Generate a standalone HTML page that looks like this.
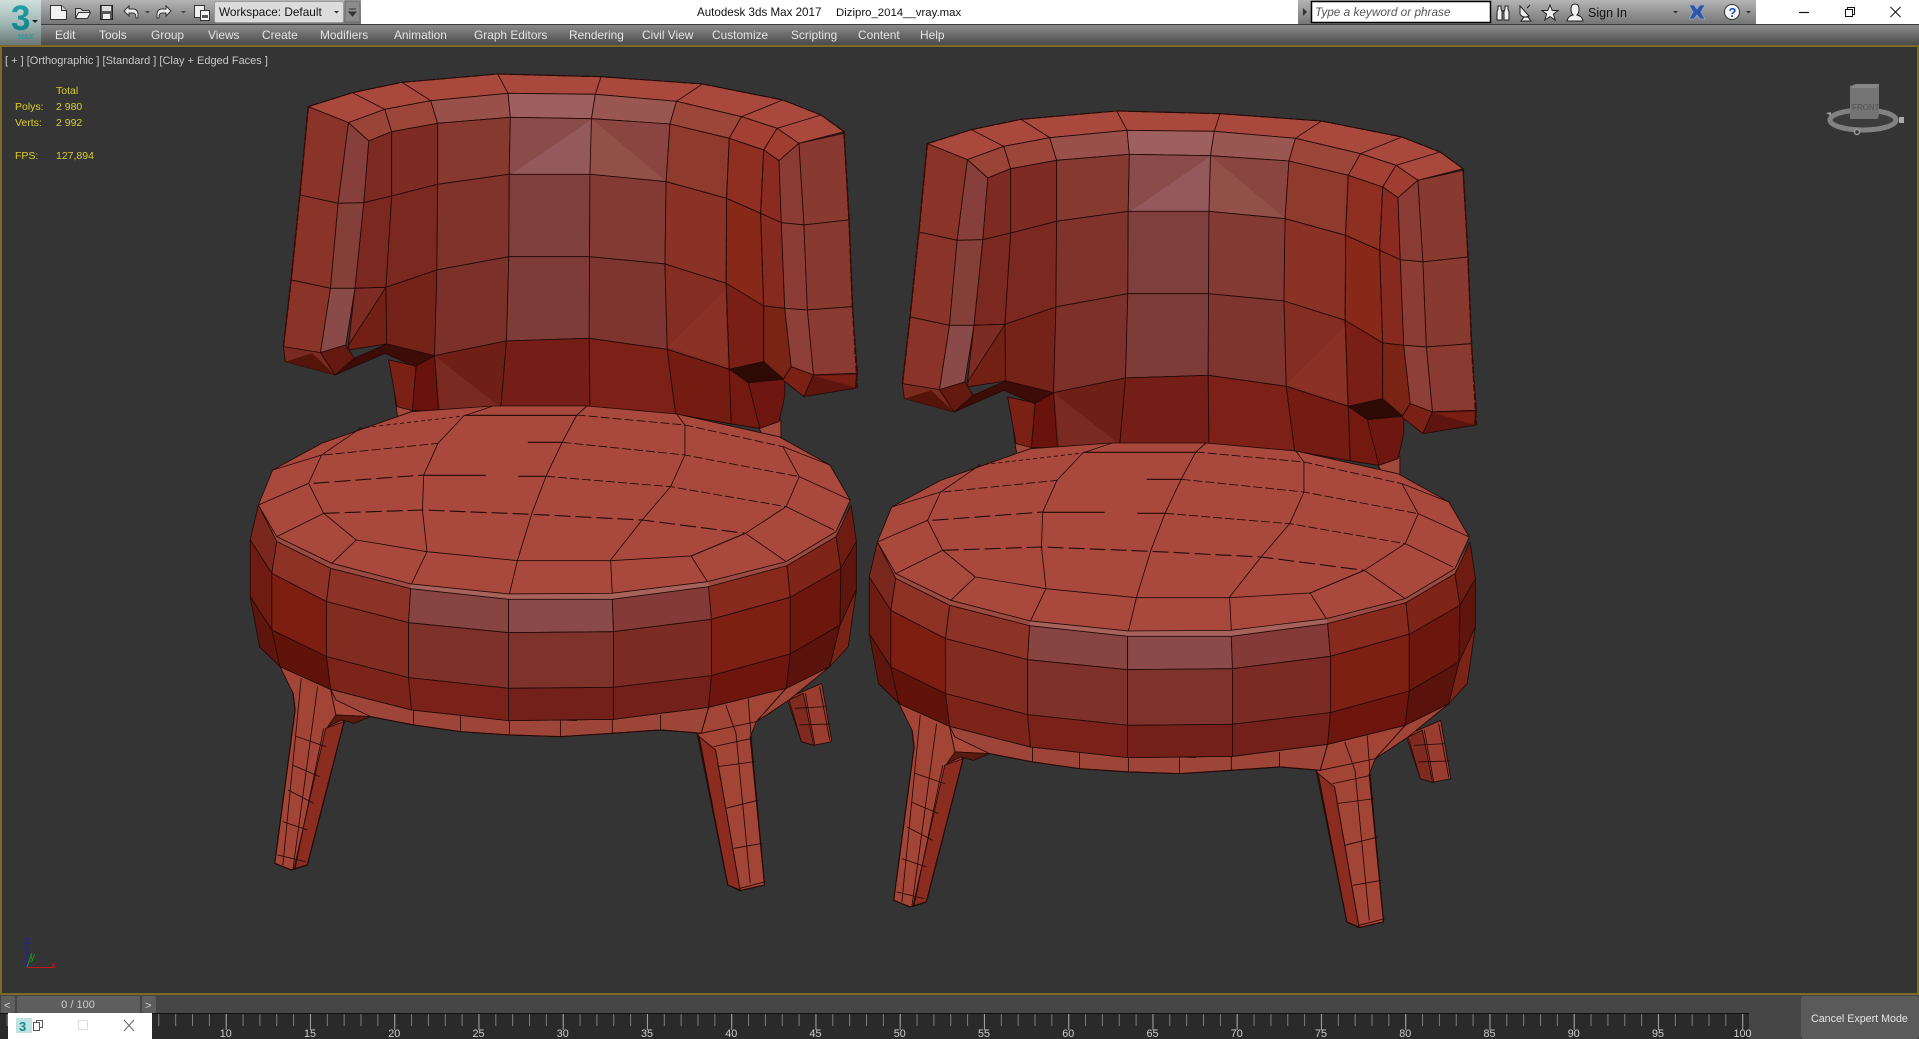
<!DOCTYPE html>
<html><head><meta charset="utf-8"><title>Autodesk 3ds Max 2017</title>
<style>
html,body{margin:0;padding:0;width:1919px;height:1039px;overflow:hidden;background:#333}
svg{display:block}
text{font-family:"Liberation Sans",sans-serif;white-space:pre}
.m polygon,.m path{vector-effect:non-scaling-stroke;stroke:#240906;stroke-width:.85;stroke-linejoin:round}
.m path{fill:none}
.m .nl{stroke:none}
.d{stroke-dasharray:9 3}
.menu text{font-size:11.900px;fill:#e4e4e4}
.st text{font-size:10.500px;fill:#dccb2c}
.lb text{font-size:10.800px;fill:#cfcfcf;text-anchor:middle}
</style></head><body>
<svg width="1919" height="1039" viewBox="0 0 1919 1039" xmlns="http://www.w3.org/2000/svg">
<defs>
<linearGradient id="tb" x1="0" y1="0" x2="0" y2="1"><stop offset="0" stop-color="#b4b4b4"/><stop offset="1" stop-color="#767676"/></linearGradient>
<linearGradient id="mb" x1="0" y1="0" x2="0" y2="1"><stop offset="0" stop-color="#8e8e8e"/><stop offset="1" stop-color="#4a4a4a"/></linearGradient>
<linearGradient id="lg" x1="0" y1="0" x2="0" y2="1"><stop offset="0" stop-color="#cfe0dd"/><stop offset=".55" stop-color="#9db5b2"/><stop offset="1" stop-color="#6a7474"/></linearGradient>
<linearGradient id="tl" x1="0" y1="0" x2="0" y2="1"><stop offset="0" stop-color="#26a9b2"/><stop offset="1" stop-color="#0f7880"/></linearGradient>
<pattern id="tk" x="0" y="0" width="16.85" height="30" patternUnits="userSpaceOnUse" patternTransform="translate(57.2 1014)"><rect x="0" y="0" width="1" height="12" fill="#7c7c7c"/></pattern>
<pattern id="tk5" x="0" y="0" width="84.25" height="30" patternUnits="userSpaceOnUse" patternTransform="translate(57.2 1014)"><rect x="0" y="0" width="1" height="16" fill="#a0a0a0"/></pattern>

<g id="chair">
<!-- back legs -->
<g class="m" transform="translate(240,400) scale(.4082,.3333)">
<polygon fill="#9a3c30" points="1340,895 1425,850 1450,1025 1405,1036 1375,1025"/>
<polygon fill="#7e2a20" points="1345,900 1380,880 1405,1036 1375,1025"/>
<path d="M1385,880 L1408,1035M1420,860 L1445,1022M1360,925 L1435,920M1370,975 L1447,972"/>
</g>
<!-- backrest -->
<g class="m" transform="translate(270,60) scale(.3827,.3333)">
<polygon fill="#a0493c" points="325,1000 375,1050 340,1090 332,1060"/>
<polygon fill="#a0493c" points="1270,1090 1335,1080 1335,1140 1290,1130"/>
<polygon fill="#7a2015" points="310,900 382,918 372,1052 332,1040"/>
<polygon fill="#6a120c" points="382,918 430,887 442,1052 372,1052"/>
<polygon fill="#6e1710" points="1250,968 1345,958 1345,1010 1330,1085 1280,1105 1255,1100"/>
<polygon fill="#741910" points="1200,928 1250,968 1280,1105 1205,1092"/>
<polygon fill="#a9493d" points="100,140 215,98 345,67 595,42 865,50 1130,72 1340,120 1440,165 1500,215 1382,250 1325,205 1232,170 1062,124 850,103 622,100 420,122 300,148 205,188"/>
<path d="M215,98 L300,148M345,67 L420,122M595,42 L622,100M865,50 L850,103M1130,72 L1062,124M1340,120 L1232,170M1440,165 L1325,205"/>
<polygon fill="#9a4337" points="205,188 300,148 318,215 258,243"/>
<polygon fill="#9c4639" points="300,148 420,122 438,190 318,215"/>
<polygon fill="#9a504a" points="420,122 622,100 628,172 438,190"/>
<polygon fill="#9e605e" points="622,100 850,103 840,176 628,172"/>
<polygon fill="#9a5650" points="850,103 1062,124 1045,192 840,176"/>
<polygon fill="#9c4539" points="1062,124 1232,170 1200,235 1045,192"/>
<polygon fill="#a24034" points="1232,170 1325,205 1290,270 1200,235"/>
<polygon fill="#9e3d30" points="1325,205 1382,250 1330,302 1290,270"/>
<polygon fill="#7c2a22" points="258,243 318,215 318,408 245,428"/>
<polygon fill="#7e2b24" points="318,215 438,190 438,373 318,408"/>
<polygon fill="#85392f" points="438,190 628,172 625,343 438,373"/>
<polygon fill="#8a4c4a" points="628,172 840,176 836,343 625,343"/>
<polygon class="nl" fill="#93595c" points="840,178 632,342 836,343"/>
<polygon fill="#8a4540" points="840,176 1045,192 1035,365 836,343"/>
<polygon class="nl" fill="#925048" points="842,178 1032,362 838,342"/>
<polygon fill="#8e3a2c" points="1045,192 1200,235 1193,415 1035,365"/>
<polygon fill="#8e2f22" points="1200,235 1290,270 1282,460 1193,415"/>
<polygon fill="#8a2a20" points="1290,270 1330,302 1336,488 1282,460"/>
<polygon fill="#7a2820" points="245,428 318,408 303,682 222,685"/>
<polygon fill="#7a2820" points="318,408 438,373 436,630 303,682"/>
<polygon fill="#7f332b" points="438,373 625,343 624,590 436,630"/>
<polygon fill="#7f3f3c" points="625,343 836,343 835,590 624,590"/>
<polygon fill="#843a34" points="836,343 1035,365 1032,612 835,590"/>
<polygon fill="#8a3226" points="1035,365 1193,415 1192,670 1032,612"/>
<polygon fill="#882819" points="1193,415 1282,460 1290,738 1192,670"/>
<polygon fill="#862a1f" points="1282,460 1336,488 1345,745 1290,738"/>
<polygon fill="#721f14" points="222,685 303,682 305,852 205,870"/>
<polygon fill="#7c2c22" points="222,685 303,682 205,855"/>
<polygon fill="#752319" points="303,682 436,630 430,887 305,852"/>
<polygon fill="#7c302a" points="436,630 624,590 618,843 430,887"/>
<polygon fill="#7e3c38" points="624,590 835,590 834,835 618,843"/>
<polygon fill="#7e3530" points="835,590 1032,612 1038,868 834,835"/>
<polygon fill="#842d22" points="1032,612 1192,670 1200,928 1038,868"/>
<polygon class="nl" fill="#8a3226" points="1040,860 1190,690 1195,920"/>
<polygon fill="#7a1f15" points="1192,670 1290,738 1290,905 1200,928"/>
<polygon fill="#7a2416" points="1290,738 1345,745 1362,920 1340,960 1290,905"/>
<polygon fill="#701f16" points="430,887 618,843 603,1045 440,1052"/>
<polygon class="nl" fill="#7a2a20" points="432,890 600,1040 445,1050"/>
<polygon fill="#741e17" points="618,843 834,835 836,1045 603,1045"/>
<polygon fill="#7c2018" points="834,835 1038,868 1060,1062 836,1045"/>
<polygon fill="#741b12" points="1038,868 1200,928 1205,1092 1060,1062"/>
<polygon fill="#3e0c06" points="170,945 220,895 305,852 430,887 380,920 300,880"/>
<polygon fill="#2e0a05" points="1200,928 1290,905 1340,955 1250,968"/>
<polygon fill="#8a3328" points="100,140 205,188 178,430 78,405"/>
<polygon fill="#8a3328" points="78,405 178,430 158,685 55,660"/>
<polygon fill="#8a3328" points="55,660 158,685 132,878 35,860"/>
<polygon fill="#863f3a" points="205,188 258,243 245,428 178,430"/>
<polygon fill="#844038" points="178,430 245,428 222,685 158,685"/>
<polygon fill="#8a4a48" points="158,685 222,685 198,855 132,878"/>
<polygon fill="#7a2a1e" points="35,860 132,878 170,945 40,905"/>
<polygon class="nl" fill="#541409" points="40,905 110,880 170,945"/>
<polygon fill="#641a10" points="132,878 198,855 220,895 170,945"/>
<polygon fill="#883a30" points="1382,250 1500,220 1513,480 1395,495"/>
<polygon fill="#883a30" points="1395,495 1513,480 1522,740 1404,750"/>
<polygon fill="#8a3a30" points="1404,750 1522,740 1535,940 1420,945"/>
<polygon fill="#8a3c34" points="1330,302 1382,250 1395,495 1336,488"/>
<polygon fill="#8c3c34" points="1336,488 1395,495 1404,750 1345,745"/>
<polygon fill="#8e4038" points="1345,745 1404,750 1420,945 1362,920"/>
<polygon fill="#7a2015" points="1362,920 1420,945 1395,1010 1340,960"/>
<polygon fill="#5e1510" points="1420,945 1535,940 1530,985 1395,1010"/>
<polygon class="nl" fill="#7a1f14" points="1422,948 1530,945 1528,982"/>
<path style="stroke-width:1.6;stroke:#3a0a06" stroke-dasharray="7 2" d="M100,140 L78,405 L55,660 L35,860M1500,215 L1513,480 L1522,740 L1535,985"/>
<path style="stroke-width:1.1" stroke-dasharray="10 2" d="M100,140 L215,98 L345,67 L595,42 L865,50 L1130,72 L1340,120 L1440,165 L1500,215"/>
<path class="d" d="M1200,235 L1193,415 L1192,670 L1200,928M1290,270 L1282,460 L1290,738 L1290,905"/>
</g>
<!-- seat + front legs -->
<g class="m" transform="translate(240,400) scale(.4082,.3333)">
<polygon fill="#a24436" points="130,880 135,930 85,1390 125,1410 165,1395 255,965 235,945 222,868 98,800"/>
<polygon fill="#8a2c20" points="210,985 255,965 165,1395 132,1408"/>
<polygon fill="#a8493c" points="222,868 320,900 320,950 235,945"/>
<polygon fill="#5a1a10" points="235,945 320,950 280,970 250,960 215,980"/>
<path d="M150,835 L105,1395M190,860 L130,1405M135,1008 L210,1040M128,1095 L195,1130M118,1170 L180,1210M105,1265 L165,1290M92,1365 L160,1385M205,985 L135,1405"/>
<path style="stroke-width:1.2" d="M130,880 L135,930 L85,1390 L125,1410 L165,1395 L255,965"/>
<polygon fill="#a24436" points="1120,1000 1148,922 1338,865 1265,965 1250,1010 1285,1455 1225,1472 1195,1455 1125,1010"/>
<polygon fill="#8c2c20" points="1125,1010 1165,1050 1225,1470 1195,1455"/>
<polygon class="nl" fill="#a64a3e" points="1140,925 1130,1000 1030,990"/>
<path d="M1190,915 L1215,1000 L1250,1450M1245,895 L1252,1010 L1285,1455M1165,1050 L1225,1470M1130,1000 L1265,965M1160,1040 L1255,1015M1170,1100 L1262,1085M1190,1225 L1272,1200M1210,1345 L1280,1330M1225,1465 L1288,1445M1265,965 L1338,865M1345,900 L1265,965"/>
<path style="stroke-width:1.2" d="M1120,1000 L1195,1455 L1225,1472 L1285,1455 L1250,1010"/>
<polygon fill="#a04537" points="1338,865 1445,800 1345,900 1265,965"/>
<polygon fill="#9c4538" points="222,868 420,930 658,962 915,958 1148,922 1130,1000 1030,990 912,1000 785,1010 660,1005 540,995 425,975 320,950 235,900"/>
<path d="M425,930 L425,975M540,945 L540,995M660,962 L660,1005M785,960 L785,1010M912,958 L912,1000M1030,945 L1030,990M1148,922 L1130,1000M750,958 L825,962"/>
<path style="stroke-width:1.1" d="M320,950 L425,975 L540,995 L660,1005 L785,1010 L912,1000 L1030,990 L1130,1000"/>
<polygon fill="#6a1a10" points="48,740 98,800 222,868 212,770 78,690"/>
<!-- rim strip -->
<polygon class="nl" fill="#9a4a40" points="45,315 90,410 225,490 420,552 660,582 910,580 1145,545 1338,485 1460,395 1497,315 1460,410 1340,497 1148,560 912,598 658,598 418,566 222,505 90,424"/>
<polygon class="nl" fill="#a8625c" points="420,552 660,582 910,580 1145,545 1148,560 912,598 658,598 418,566"/>
<!-- side R0-R1 -->
<polygon fill="#7a281d" points="45,315 90,424 78,520 25,420"/>
<polygon fill="#8e3226" points="90,424 222,505 212,605 78,520"/>
<polygon fill="#8c3226" points="222,505 418,566 413,668 212,605"/>
<polygon fill="#874440" points="418,566 658,598 658,698 413,668"/>
<polygon fill="#8a4a4a" points="658,598 912,598 915,695 658,698"/>
<polygon fill="#843a36" points="912,598 1148,560 1155,658 915,695"/>
<polygon fill="#88291e" points="1148,560 1340,497 1348,592 1155,658"/>
<polygon fill="#7e2418" points="1340,497 1460,410 1472,505 1348,592"/>
<polygon fill="#6e1c12" points="1460,410 1497,315 1510,425 1472,505"/>
<!-- R1-R2 -->
<polygon fill="#6e1b12" points="25,420 78,520 78,690 25,590"/>
<polygon fill="#7e1d12" points="78,520 212,605 212,770 78,690"/>
<polygon fill="#802c20" points="212,605 413,668 413,833 212,770"/>
<polygon fill="#7e302a" points="413,668 658,698 658,865 413,833"/>
<polygon fill="#7e322c" points="658,698 915,695 915,862 658,865"/>
<polygon fill="#7c2a24" points="915,695 1155,658 1155,827 915,862"/>
<polygon fill="#7e1f14" points="1155,658 1348,592 1348,762 1155,827"/>
<polygon fill="#6c170e" points="1348,592 1472,505 1470,675 1348,762"/>
<polygon fill="#5e150e" points="1472,505 1510,425 1510,570 1470,675"/>
<!-- R2-R3 -->
<polygon fill="#5e150e" points="25,590 78,690 98,800 48,740"/>
<polygon fill="#621309" points="78,690 212,770 222,868 98,800"/>
<polygon fill="#7c2419" points="212,770 413,833 420,930 222,868"/>
<polygon fill="#7a2219" points="413,833 658,865 658,962 420,930"/>
<polygon fill="#74201a" points="658,865 915,862 915,958 658,962"/>
<polygon fill="#74201a" points="915,862 1155,827 1148,922 915,958"/>
<polygon fill="#6e150e" points="1155,827 1348,762 1338,865 1148,922"/>
<polygon fill="#5a120c" points="1348,762 1470,675 1445,800 1338,865"/>
<polygon fill="#7a2418" points="1470,675 1510,570 1490,740 1445,800"/>
<!-- top surface -->
<polygon fill="#a9493d" points="45,315 80,210 200,130 420,35 620,18 850,18 1070,42 1320,110 1445,195 1495,300 1460,395 1338,485 1145,545 910,580 660,582 420,552 225,490 90,410"/>
<path d="M548,48 L485,130 L450,225 L447,330 L458,455 L420,552"/>
<path d="M825,45 L790,125 L750,228 L715,340 L680,480 L660,582"/>
<path d="M1090,75 L1090,165 L1055,260 L985,360 L908,480 L912,580"/>
<path d="M1330,140 L1370,230 L1338,320 L1238,400 L1105,468 L1145,545"/>
<path d="M200,165 L168,250 L205,340 L285,420 L225,490"/>
<path style="stroke-width:1.1" stroke-dasharray="16 5" d="M205,340 L447,330 L715,343 L985,360 L1238,400"/>
<path style="stroke-width:1.1" stroke-dasharray="16 5" d="M180,250 L450,225"/>
<path style="stroke-width:1.1" d="M450,226 L602,226M682,229 L750,229M705,127 L790,127M550,46 L825,46"/>
<path class="d" d="M750,229 L1055,260 L1338,320"/>
<path class="d" d="M205,165 L485,130"/>
<path class="d" d="M790,127 L1090,165 L1370,230"/>
<path class="d" d="M825,45 L1090,75 L1330,140"/>
<path style="stroke-dasharray:4 3" d="M290,85 L548,48"/>
<path d="M285,420 L458,455 L680,482 L908,482 L1105,468 L1238,400"/>
<path d="M45,315 L168,250M80,210 L200,165M90,410 L205,340M1330,140 L1445,195M1370,230 L1495,300M1338,320 L1455,390M1238,400 L1338,485M200,165 L295,85M1090,75 L1070,42M548,48 L620,18M825,45 L850,18"/>
</g>
</g>
</defs>

<rect width="1919" height="1039" fill="#343434"/>
<use href="#chair"/>
<use href="#chair" transform="translate(619,37)"/>

<rect x="0" y="45" width="1919" height="2" fill="#7d6a28"/>
<rect x="0" y="45" width="2" height="950" fill="#7d6a28"/>
<rect x="1917" y="45" width="2" height="950" fill="#7d6a28"/>
<rect x="0" y="993" width="1919" height="2" fill="#7d6a28"/>

<rect width="1919" height="24" fill="#fff"/>
<rect x="0" y="24" width="1919" height="21" fill="url(#mb)"/>
<rect x="0" y="24" width="1919" height="1" fill="#3c3c3c"/>
<rect x="41" y="0" width="320" height="24" fill="url(#tb)"/>
<rect x="0" y="0" width="41" height="45" fill="url(#lg)"/>
<text x="11" y="30" style="font-size:35px;font-weight:bold;fill:url(#tl)">3</text>
<text x="18" y="39" style="font-size:7px;font-weight:bold;fill:#2a9aa0">MAX</text>
<path d="M32,20 h6 l-3,3z" fill="#222"/>

<path d="M50.500,5.500 h11 l5,5 v9 h-16z" fill="#f2f2f2" stroke="#333"/>
<path d="M61.500,5.500 v5 h5" fill="#ccc" stroke="#333"/>
<path d="M75.500,18.500 v-10 h5 l2,2 h7 v3" fill="#d8d8d8" stroke="#333"/>
<path d="M75.500,18.500 l3,-6 h12 l-3,6z" fill="#efefef" stroke="#333"/>
<rect x="100.500" y="5.500" width="12" height="14" fill="#555" stroke="#222"/>
<rect x="102" y="6" width="9" height="5" fill="#ddd"/><rect x="103" y="14" width="7" height="5" fill="#eee"/>
<path d="M124,11 l5,-5 v3 h5 q4,1 4,5 v4 h-2 q0,-5 -3,-5 h-4 v3z" fill="#eee" stroke="#333"/>
<path d="M145,11 h5 l-2.500,2.500z" fill="#444"/>
<path d="M171,11 l-5,-5 v3 h-5 q-4,1 -4,5 v4 h2 q0,-5 3,-5 h4 v3z" fill="#eee" stroke="#333"/>
<path d="M181,11 h5 l-2.500,2.500z" fill="#444"/>
<rect x="194.500" y="5.500" width="10" height="12" fill="#eee" stroke="#333"/>
<rect x="200.500" y="10.500" width="9" height="10" fill="#f4f4f4" stroke="#333"/>
<rect x="202" y="15" width="6" height="3" fill="#555"/>
<rect x="214.500" y="1.500" width="129" height="21" rx="2" fill="#dcdcdc" stroke="#9a9a9a"/>
<text x="219" y="16" style="font-size:11.800px;fill:#111">Workspace: Default</text>
<path d="M334,11 h5 l-2.500,2.500z" fill="#333"/>
<rect x="345" y="1" width="15" height="21" fill="#8c8c8c" stroke="#6a6a6a"/>
<path d="M349,9 h7 M349,12 h7 l-3.500,4z" fill="#333" stroke="#333"/>

<text x="697" y="16" style="font-size:11.600px;fill:#111">Autodesk 3ds Max 2017</text>
<text x="836" y="16" style="font-size:11.400px;fill:#111">Dizipro_2014__vray.max</text>

<rect x="1298" y="0" width="458" height="24" fill="url(#tb)"/>
<path d="M1303,8 l4,4 l-4,4z" fill="#333"/>
<rect x="1311.500" y="1.500" width="179" height="21" fill="#fff" stroke="#000" stroke-width="1.500"/>
<text x="1315" y="16" style="font-size:11.800px;font-style:italic;fill:#555">Type a keyword or phrase</text>
<path d="M1497,20 v-8 l1,-3 v-3 h3 v3 l1,3 v8z M1504,20 v-8 l1,-3 v-3 h3 v3 l1,3 v8z" fill="#f0f0f0" stroke="#222"/>
<rect x="1501.500" y="10" width="3" height="4" fill="#444"/>
<path d="M1520,6 l9,10 q-6,3 -9,-2 z M1524,17 l-3,4 h10 l-3,-4z M1527,8 l3,-3" fill="#efefef" stroke="#222"/>
<path d="M1550,5 l2.200,5.500 h5.800 l-4.600,3.600 1.800,6 -5.200,-3.500 -5.200,3.500 1.800,-6 -4.600,-3.600 h5.800z" fill="#f0f0f0" stroke="#222"/>
<path d="M1575,4 q4,0 4,5 q0,4 -2,6 q5,1 6,6 h-16 q1,-5 6,-6 q-2,-2 -2,-6 q0,-5 4,-5z" fill="#f0f0f0" stroke="#222"/>
<text x="1588" y="17" style="font-size:12.500px;fill:#111">Sign In</text>
<path d="M1673,11 h5 l-2.500,2.500z" fill="#333"/>
<path d="M1689,5 h5 l3,4 l3,-4 h5 l-4,7 l4,7 h-5 l-3,-4 l-3,4 h-5 l4,-7z" fill="#2f55a8" stroke="#94a8c8" stroke-width=".8"/>
<circle cx="1732" cy="12" r="7.500" fill="#f4f4f4" stroke="#333"/>
<text x="1728.500" y="17" style="font-size:13px;font-weight:bold;fill:#1e4fb4">?</text>
<path d="M1746,11 h5 l-2.500,2.500z" fill="#333"/>
<path d="M1799,12.500 h10" stroke="#111" stroke-width="1.200"/>
<path d="M1845.500,9.500 h7 v7 h-7z M1847.500,9.500 v-2 h7 v7 h-2" fill="none" stroke="#111"/>
<path d="M1890.500,7 l10,10 M1900.500,7 l-10,10" stroke="#111"/>

<g class="menu">
<text x="55" y="39">Edit</text><text x="99" y="39">Tools</text><text x="151" y="39">Group</text><text x="208" y="39">Views</text><text x="262" y="39">Create</text><text x="320" y="39">Modifiers</text><text x="394" y="39">Animation</text><text x="474" y="39">Graph Editors</text><text x="569" y="39">Rendering</text><text x="642" y="39">Civil View</text><text x="712" y="39">Customize</text><text x="791" y="39">Scripting</text><text x="858" y="39">Content</text><text x="920" y="39">Help</text>
</g>

<text x="5" y="64" style="font-size:11px;fill:#c8c8c8">[ + ] [Orthographic ] [Standard ] [Clay + Edged Faces ]</text>
<g class="st">
<text x="56" y="94">Total</text>
<text x="15" y="110">Polys:</text><text x="56" y="110">2 980</text>
<text x="15" y="126">Verts:</text><text x="56" y="126">2 992</text>
<text x="15" y="159">FPS:</text><text x="56" y="159">127,894</text>
</g>

<ellipse cx="1863" cy="120" rx="33" ry="10" fill="#3c3c3c" stroke="#828282" stroke-width="5"/>
<path d="M1850,86 l6,-2 h23 v32 l-2,3 h-27z" fill="#747474"/>
<path d="M1850,88 l6,-4 h23 l-2,4z" fill="#868686"/>
<path d="M1850,119 h27 l2,-4 v4z" fill="#505050"/>
<text x="1852" y="110" style="font-size:8px;fill:#525252">FRONT</text>
<circle cx="1857" cy="132" r="2.500" fill="#333" stroke="#9a9a9a" stroke-width="1.500"/>
<path d="M1826,113 l5,-1 v4z" fill="#999"/><path d="M1899,117 h5 v6 h-5z" fill="#aaa"/>

<path d="M27,967.500 V945" stroke="#1a1ad0"/>
<path d="M27,967 L32,953" stroke="#1aa01a"/>
<path d="M27,967.500 H54" stroke="#c01818"/>
<text x="25" y="944" style="font-size:10px;fill:#1a1ad0">z</text>
<text x="30" y="960" style="font-size:10px;fill:#1aa01a">y</text>
<text x="51" y="968" style="font-size:10px;fill:#c01818">x</text>

<rect x="0" y="995" width="1919" height="19" fill="#464646"/>
<rect x="1" y="996" width="14" height="17" rx="2" fill="#5e5e5e"/>
<rect x="17" y="996" width="123" height="17" rx="2" fill="#5e5e5e"/>
<rect x="142" y="996" width="14" height="17" rx="2" fill="#5e5e5e"/>
<text x="4" y="1009" style="font-size:11px;fill:#d0d0d0">&lt;</text>
<text x="145" y="1009" style="font-size:11px;fill:#d0d0d0">&gt;</text>
<text x="78" y="1008" style="font-size:11px;fill:#cfcfcf;text-anchor:middle">0 / 100</text>

<rect x="0" y="1014" width="1749" height="25" fill="#2a2a2a"/>
<rect x="1749" y="1014" width="52" height="25" fill="#464646"/>
<rect x="0" y="1013" width="1749" height="1" fill="#101010"/>
<rect x="0" y="1014" width="1749" height="25" fill="url(#tk)"/>
<rect x="0" y="1014" width="1749" height="25" fill="url(#tk5)"/>
<g class="lb">
<text x="225.700" y="1037">10</text><text x="310" y="1037">15</text><text x="394.200" y="1037">20</text><text x="478.500" y="1037">25</text><text x="562.700" y="1037">30</text><text x="647" y="1037">35</text><text x="731.200" y="1037">40</text><text x="815.500" y="1037">45</text><text x="899.700" y="1037">50</text><text x="984" y="1037">55</text><text x="1068.200" y="1037">60</text><text x="1152.500" y="1037">65</text><text x="1236.700" y="1037">70</text><text x="1321" y="1037">75</text><text x="1405.200" y="1037">80</text><text x="1489.500" y="1037">85</text><text x="1573.700" y="1037">90</text><text x="1658" y="1037">95</text><text x="1742.500" y="1037">100</text>
</g>

<rect x="1801" y="996" width="118" height="43" rx="3" fill="#5a5a5a"/>
<text x="1811" y="1022" style="font-size:10.700px;fill:#e4e4e4">Cancel Expert Mode</text>

<rect x="8" y="1013" width="144" height="26" fill="#fff"/>
<rect x="16" y="1018" width="16" height="15" fill="#bfe3e3"/>
<text x="19" y="1031" style="font-size:13px;font-weight:bold;fill:#128a90">3</text>
<path d="M33.500,1022.500 h6 v8 h-6z M36.500,1022.500 v-2 h6 v7 h-3" fill="#fff" stroke="#555"/>
<rect x="78.500" y="1020.500" width="9" height="9" fill="none" stroke="#ddd"/>
<path d="M124,1020 l10,11 M134,1020 l-10,11" stroke="#666"/>
</svg>
</body></html>
